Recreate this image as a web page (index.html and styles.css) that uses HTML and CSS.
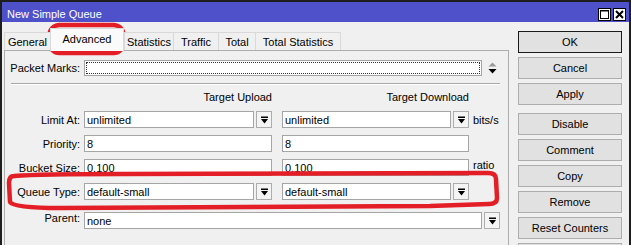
FILE: index.html
```html
<!DOCTYPE html>
<html>
<head>
<meta charset="utf-8">
<link rel="stylesheet" href="styles.css">
</head>
<body>
<div class="win">
  <div class="titlebar">
    <span class="title">New Simple Queue</span>
    <div class="tbtns">
      <span class="tb"><svg width="9" height="9" viewBox="0 0 9 9"><rect x="0.5" y="0.5" width="8" height="8" fill="none" stroke="#000" stroke-width="1"/><rect x="0" y="0" width="9" height="1.5" fill="#000"/></svg></span>
      <span class="tb"><svg width="9" height="9" viewBox="0 0 9 9"><path d="M1 1 L8 8 M8 1 L1 8" stroke="#000" stroke-width="2"/></svg></span>
    </div>
  </div>
  <div class="body">
    <div class="left">
      <div class="tabs">
        <span class="tab t-gen">General</span>
        <span class="tab t-adv sel">Advanced</span>
        <span class="tab t-stat">Statistics</span>
        <span class="tab t-traf">Traffic</span>
        <span class="tab t-tot">Total</span>
        <span class="tab t-tots">Total Statistics</span>
      </div>
      <div class="panel">
        <div class="pm-row">
          <span class="lbl">Packet Marks:</span>
          <span class="input pm-input"><span class="dots"></span></span>
          <span class="spin"><svg width="9" height="12" viewBox="0 0 9 12"><polygon points="0.5,4.5 8.5,4.5 4.5,0.5" fill="#9a9a9a"/><polygon points="0.5,7 8.5,7 4.5,11.5" fill="#000"/></svg></span>
        </div>
        <div class="sep"></div>
        <div class="grid">
          <span></span><span class="hdr">Target Upload</span><span class="hdr">Target Download</span><span></span>

          <span class="lbl">Limit At:</span>
          <span class="fld"><span class="input">unlimited</span><span class="dd"><svg width="7" height="8" viewBox="0 0 7 8"><rect x="0" y="0.5" width="7" height="1.5" fill="#000"/><polygon points="0,3 7,3 3.5,7.5" fill="#000"/></svg></span></span>
          <span class="fld c2"><span class="input">unlimited</span><span class="dd"><svg width="7" height="8" viewBox="0 0 7 8"><rect x="0" y="0.5" width="7" height="1.5" fill="#000"/><polygon points="0,3 7,3 3.5,7.5" fill="#000"/></svg></span></span>
          <span class="unit">bits/s</span>

          <span class="lbl">Priority:</span>
          <span class="fld"><span class="input">8</span></span>
          <span class="fld c2"><span class="input">8</span></span>
          <span></span>

          <span class="lbl">Bucket Size:</span>
          <span class="fld"><span class="input">0.100</span></span>
          <span class="fld c2"><span class="input">0.100</span></span>
          <span class="unit up">ratio</span>

          <span class="lbl">Queue Type:</span>
          <span class="fld"><span class="input">default-small</span><span class="dd"><svg width="7" height="8" viewBox="0 0 7 8"><rect x="0" y="0.5" width="7" height="1.5" fill="#000"/><polygon points="0,3 7,3 3.5,7.5" fill="#000"/></svg></span></span>
          <span class="fld c2"><span class="input">default-small</span><span class="dd"><svg width="7" height="8" viewBox="0 0 7 8"><rect x="0" y="0.5" width="7" height="1.5" fill="#000"/><polygon points="0,3 7,3 3.5,7.5" fill="#000"/></svg></span></span>
          <span></span>

          <span class="lbl parent-l">Parent:</span>
          <span class="fld parent"><span class="input">none</span><span class="dd"><svg width="7" height="8" viewBox="0 0 7 8"><rect x="0" y="0.5" width="7" height="1.5" fill="#000"/><polygon points="0,3 7,3 3.5,7.5" fill="#000"/></svg></span></span>
        </div>
      </div>
    </div>
    <div class="btns">
      <span class="btn def">OK</span>
      <span class="btn">Cancel</span>
      <span class="btn">Apply</span>
      <span class="btn grp">Disable</span>
      <span class="btn">Comment</span>
      <span class="btn">Copy</span>
      <span class="btn">Remove</span>
      <span class="btn">Reset Counters</span>
      <span class="btn"></span>
    </div>
  </div>
</div>
<svg class="annot" width="631" height="245" viewBox="0 0 631 245">
  <rect x="49.5" y="25" width="74" height="28" rx="10" ry="10" fill="none" stroke="#e31e26" stroke-width="4.5"/>
  <path d="M14 176 Q40 174 120 174 L488 173 Q496 173 496 179 L497 198 Q497 204 489 204 L430 206 L60 208 Q14 208 10 202 L9 183 Q9 176 14 176 Z" fill="none" stroke="#e31e26" stroke-width="4.5" stroke-linejoin="round"/>
</svg>
</body>
</html>
```
FILE: styles.css
```css
* { box-sizing: border-box; }
html, body { margin: 0; padding: 0; }
body {
  width: 631px;
  height: 245px;
  overflow: hidden;
  background: #f0f0f0;
  font-family: "Liberation Sans", Arial, sans-serif;
  font-size: 11px;
  color: #000;
}
.win {
  width: 631px;
  height: 245px;
  border: 2px solid #1e1e1e;
  border-bottom: none;
  background: #f0f0f0;
  display: flex;
  flex-direction: column;
  overflow: hidden;
}
.titlebar {
  height: 20px;
  flex: none;
  background: #4e51c9;
  color: #fff;
  display: flex;
  justify-content: space-between;
  align-items: flex-start;
  padding: 0 3px 0 5px;
}
.title { line-height: 12px; margin-top: 6px; }
.tbtns { display: flex; gap: 2px; margin-top: 6px; }
.tb {
  width: 13px;
  height: 13px;
  background: #fff;
  border: 1px solid #000;
  display: flex;
  align-items: center;
  justify-content: center;
}
.body { flex: 1; display: flex; padding-left: 2px; }
.left { width: 505px; flex: none; display: flex; flex-direction: column; padding-top: 6px; }
.tabs { display: flex; align-items: flex-end; height: 22px; position: relative; z-index: 1; }
.tab {
  height: 18px;
  border: 1px solid #d9d9d9;
  border-bottom: none;
  border-right: none;
  background: #f0f0f0;
  display: flex;
  align-items: center;
  justify-content: center;
  white-space: nowrap;
}
.tab.sel { height: 23px; margin-bottom: -1px; background: #fafafa; border: 1px solid #d9d9d9; border-bottom: none; padding-bottom: 3px; }
.t-gen { width: 46px; }
.t-adv { width: 74px; }
.t-stat { width: 49px; }
.t-traf { width: 45px; }
.t-tot { width: 37px; }
.t-tots { width: 86px; border-right: 1px solid #d9d9d9; }
.panel {
  flex: 1;
  border: 1px solid #adadad;
  border-bottom: none;
  background: #f0f0f0;
}
.pm-row { display: flex; align-items: center; margin-top: 9px; height: 16px; }
.lbl { width: 79px; padding-right: 4px; text-align: right; flex: none; white-space: nowrap; align-self: center; }
.input {
  background: #fff;
  border: 1px solid #a5a5a5;
  height: 100%;
  flex: 1;
  display: flex;
  align-items: center;
  padding-left: 2px;
  white-space: nowrap;
  overflow: hidden;
}
.pm-input { width: 398px; flex: none; padding: 1px; }
.dots { display: block; width: 100%; height: 100%; border: 1px dotted #333; }
.spin { margin-left: 6px; display: flex; }
.sep { margin: 7px 0 0 6px; width: 489px; height: 2px; border-top: 1px solid #a8a8a8; border-bottom: 1px solid #fff; }
.grid {
  display: grid;
  grid-template-columns: 79px 198px 189px 1fr;
  grid-template-rows: 13px 17px 17px 17px 17px 17px;
  row-gap: 7px;
  margin-top: 6px;
}
.hdr { text-align: right; width: 188px; line-height: 13px; }
.grid .hdr + .hdr { width: 187px; }
.fld { display: flex; width: 188px; height: 17px; gap: 2px; }
.fld.c2 { width: 187px; }
.dd {
  width: 16px;
  flex: none;
  border: 1px solid #adadad;
  background: #f4f4f4;
  display: flex;
  align-items: center;
  justify-content: center;
}
.unit { align-self: center; padding-left: 2px; }
.unit.up { align-self: start; line-height: 13px; }
.parent-l { margin-top: 5px; }
.parent { grid-column: 2 / 5; width: 416px; margin-top: 5px; }
.btns { width: 104px; margin-left: 9px; padding-top: 9px; display: flex; flex-direction: column; gap: 4px; flex: none; }
.btn {
  height: 22px;
  flex: none;
  background: #e1e1e1;
  border: 1px solid #adadad;
  display: flex;
  align-items: center;
  justify-content: center;
  white-space: nowrap;
}
.btn.def { border: 1px solid #1a1a1a; }
.btn.grp { margin-top: 4px; }
.annot { position: absolute; left: 0; top: 0; pointer-events: none; }
```
